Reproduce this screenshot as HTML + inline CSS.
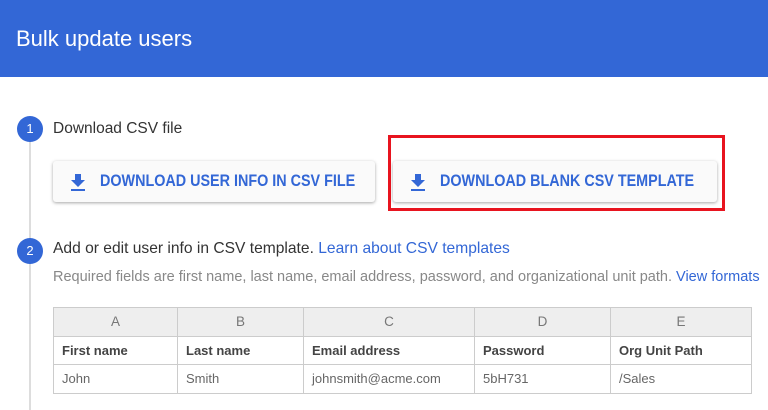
<!DOCTYPE html>
<html><head><style>
*{margin:0;padding:0;box-sizing:border-box}
body{width:768px;height:410px;overflow:hidden;background:#fff;font-family:"Liberation Sans",Arial,sans-serif;position:relative}
.hdr{position:absolute;left:0;top:0;width:768px;height:77px;background:#3367d6}
.hdr span{position:absolute;left:16px;top:26px;color:#fff;font-size:22px}
.line{position:absolute;left:29px;top:140px;width:2px;height:270px;background:#ddd}
.circ{position:absolute;width:26px;height:26px;border-radius:50%;background:#3367d6;color:#fff;font-size:13px;text-align:center;line-height:26px}
.t{position:absolute;font-size:15.5px;color:#333;white-space:nowrap}
.btn{position:absolute;height:41px;background:#fafafa;border-radius:3px;box-shadow:0 1px 3px rgba(0,0,0,.35);color:#3367d6;font-size:16.5px;line-height:41px;white-space:nowrap;font-weight:bold}
.btn svg{position:absolute;left:16px;top:12px}
.btn span{position:absolute;left:47px;transform:scaleX(0.87);transform-origin:left center}
.red{position:absolute;left:388px;top:135px;width:337px;height:76px;border:3px solid #e8141f}
a{color:#3367d6;text-decoration:none}
table{position:absolute;left:53px;top:307px;width:699px;border-collapse:collapse;font-size:13px}
td{border:1px solid #ccc;height:28.5px;padding-left:8px;color:#666}
tr.h td{background:#eee;text-align:center;padding:0;color:#777;font-size:13.5px}
tr.b td{font-weight:bold;color:#444}
</style></head><body>
<div class="hdr"><span>Bulk update users</span></div>
<div class="line"></div>
<div class="circ" style="left:17px;top:116px">1</div>
<div class="circ" style="left:17px;top:238px">2</div>
<div class="t" style="left:53px;top:120px">Download CSV file</div>
<div class="btn" style="left:53px;top:161px;width:322px"><svg width="18" height="18" viewBox="0 0 18 18"><path d="M6 1h6v6h4l-7 7-7-7h4z M2 16h14v2H2z" fill="#3367d6"/></svg><span>DOWNLOAD USER INFO IN CSV FILE</span></div>
<div class="red"></div>
<div class="btn" style="left:393px;top:161px;width:324px"><svg width="18" height="18" viewBox="0 0 18 18"><path d="M6 1h6v6h4l-7 7-7-7h4z M2 16h14v2H2z" fill="#3367d6"/></svg><span>DOWNLOAD BLANK CSV TEMPLATE</span></div>
<div class="t" style="left:53px;top:240px;font-size:15.6px">Add or edit user info in CSV template. <a>Learn about CSV templates</a></div>
<div class="t" style="left:53px;top:269px;font-size:14.5px;color:#888">Required fields are first name, last name, email address, password, and organizational unit path. <a>View formats</a></div>
<table>
<tr class="h"><td style="width:124px">A</td><td style="width:126px">B</td><td style="width:171px">C</td><td style="width:136px">D</td><td>E</td></tr>
<tr class="b"><td>First name</td><td>Last name</td><td>Email address</td><td>Password</td><td>Org Unit Path</td></tr>
<tr><td>John</td><td>Smith</td><td>johnsmith@acme.com</td><td>5bH731</td><td>/Sales</td></tr>
</table>
</body></html>
